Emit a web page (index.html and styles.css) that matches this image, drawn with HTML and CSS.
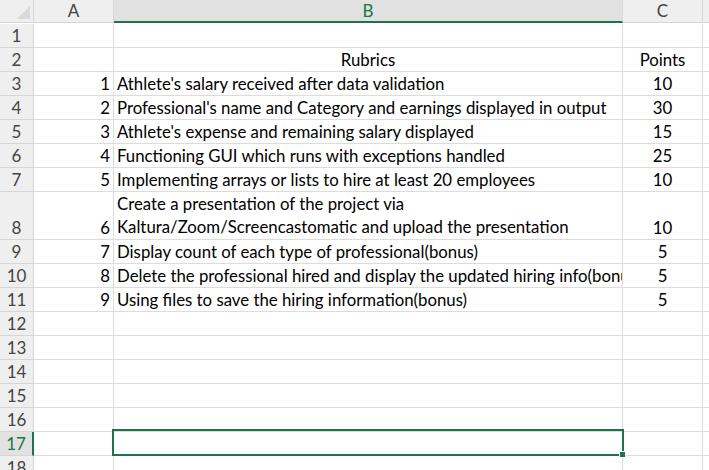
FILE: index.html
```html
<!DOCTYPE html>
<html lang="en">

<head>
    <meta charset="UTF-8">
    <title>Rubrics</title>
    <link rel="stylesheet" href="styles.css">
</head>

<body>
    <div class="sheet">
        <!-- column headers -->
        <div class="corner"><span class="tri"></span></div>
        <div class="colhead">A</div>
        <div class="colhead sel">B</div>
        <div class="colhead">C</div>
        <div class="colhead"></div>

        <div class="rowhead">1</div><div class="cell"></div><div class="cell"></div><div class="cell"></div><div class="cell"></div>
        <div class="rowhead">2</div><div class="cell"></div><div class="cell mid">Rubrics</div><div class="cell mid">Points</div><div class="cell"></div>
        <div class="rowhead">3</div><div class="cell num">1</div><div class="cell">Athlete's salary received after data validation</div><div class="cell mid">10</div><div class="cell"></div>
        <div class="rowhead">4</div><div class="cell num">2</div><div class="cell">Professional's name and Category and earnings displayed in output</div><div class="cell mid">30</div><div class="cell"></div>
        <div class="rowhead">5</div><div class="cell num">3</div><div class="cell">Athlete's expense and remaining salary displayed</div><div class="cell mid">15</div><div class="cell"></div>
        <div class="rowhead">6</div><div class="cell num">4</div><div class="cell">Functioning GUI which runs with exceptions handled</div><div class="cell mid">25</div><div class="cell"></div>
        <div class="rowhead">7</div><div class="cell num">5</div><div class="cell">Implementing arrays or lists to hire at least 20 employees</div><div class="cell mid">10</div><div class="cell"></div>
        <div class="rowhead tall">8</div><div class="cell tall num">6</div><div class="cell tall wrap">Create a presentation of the project via<br>Kaltura/Zoom/Screencastomatic and upload the presentation</div><div class="cell tall mid">10</div><div class="cell tall"></div>
        <div class="rowhead">9</div><div class="cell num">7</div><div class="cell">Display count of each type of professional(bonus)</div><div class="cell mid">5</div><div class="cell"></div>
        <div class="rowhead">10</div><div class="cell num">8</div><div class="cell">Delete the professional hired and display the updated hiring info(bonus)</div><div class="cell mid">5</div><div class="cell"></div>
        <div class="rowhead">11</div><div class="cell num">9</div><div class="cell">Using files to save the hiring information(bonus)</div><div class="cell mid">5</div><div class="cell"></div>
        <div class="rowhead">12</div><div class="cell"></div><div class="cell"></div><div class="cell"></div><div class="cell"></div>
        <div class="rowhead">13</div><div class="cell"></div><div class="cell"></div><div class="cell"></div><div class="cell"></div>
        <div class="rowhead">14</div><div class="cell"></div><div class="cell"></div><div class="cell"></div><div class="cell"></div>
        <div class="rowhead">15</div><div class="cell"></div><div class="cell"></div><div class="cell"></div><div class="cell"></div>
        <div class="rowhead">16</div><div class="cell"></div><div class="cell"></div><div class="cell"></div><div class="cell"></div>
        <div class="rowhead sel">17</div><div class="cell"></div><div class="cell"></div><div class="cell"></div><div class="cell"></div>
        <div class="rowhead">18</div><div class="cell"></div><div class="cell"></div><div class="cell"></div><div class="cell"></div>

        <!-- active cell B17 -->
        <div class="active"><span class="handle"></span></div>
    </div>
</body>

</html>
```

FILE: styles.css
```css
body {
    margin: 0;
    background-color: #ffffff;
    overflow: hidden;
}

.sheet {
    position: relative;
    display: grid;
    grid-template-columns: 34px 80px 509px 80px 20px;
    grid-auto-rows: 24px;
    font-family: Lato, "Liberation Sans", sans-serif;
    font-size: 16.8px;
    color: #000000;
}

.corner,
.colhead {
    height: 23px;
    box-sizing: border-box;
    background-color: #efefef;
    border-right: 1px solid #d6d6d6;
    border-bottom: 1px solid #d6d6d6;
}

.corner {
    position: relative;
}

.tri {
    position: absolute;
    right: 3px;
    bottom: 3px;
    width: 0;
    height: 0;
    border-left: 13px solid transparent;
    border-bottom: 13px solid #dadada;
}

.colhead {
    color: #444444;
    text-align: center;
    line-height: 22px;
    font-size: 17px;
}

.colhead.sel {
    background-color: #e1e1e1;
    color: #217346;
    border-bottom: 2px solid #217346;
}

.rowhead {
    box-sizing: border-box;
    background-color: #efefef;
    border-right: 1px solid #d6d6d6;
    border-bottom: 1px solid #d6d6d6;
    color: #444444;
    font-size: 17px;
    text-align: center;
    display: flex;
    align-items: flex-end;
    justify-content: center;
    padding-bottom: 1px;
}

.rowhead.sel {
    background-color: #e1e1e1;
    color: #217346;
    border-right: 2px solid #217346;
}

.cell {
    box-sizing: border-box;
    border-right: 1px solid #dcdcdc;
    border-bottom: 1px solid #dcdcdc;
    padding: 0 3px 1px 3px;
    display: flex;
    align-items: flex-end;
    white-space: nowrap;
    overflow: hidden;
}

.num {
    justify-content: flex-end;
}

.mid {
    justify-content: center;
}

.tall {
    height: 48px;
}

.sheet > .tall {
    grid-row: span 2;
}

.wrap {
    line-height: 23px;
    white-space: nowrap;
}

.active {
    position: absolute;
    left: 112px;
    top: 429px;
    width: 512px;
    height: 27px;
    box-sizing: border-box;
    border: 2px solid #217346;
}

.handle {
    position: absolute;
    right: -4px;
    bottom: -4px;
    width: 5px;
    height: 5px;
    background-color: #217346;
    border: 1px solid #ffffff;
}
```
